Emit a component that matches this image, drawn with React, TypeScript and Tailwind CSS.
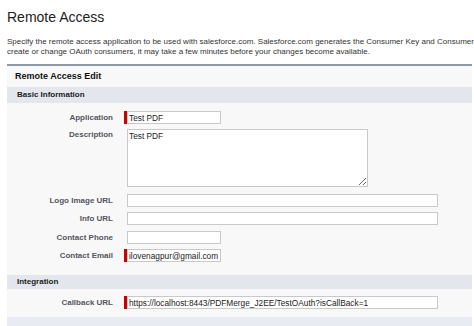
import React from "react";

interface FieldRowProps {
  label: string;
  value?: string;
  width: string;
  required?: boolean;
  className?: string;
}

const FieldRow: React.FC<FieldRowProps> = ({ label, value, width, required, className }) => {
  return (
    <div className={`flex items-start ${className ?? ""}`}>
      <div className="w-[106px] shrink-0 pt-[1px] text-right text-[8px] font-bold leading-[11px] text-[#55555f]">
        {label}
      </div>
      <div className="w-[11px] shrink-0" />
      <div className={`h-[13px] w-[3px] shrink-0 ${required ? "bg-[#c00]" : ""}`} />
      <input
        type="text"
        defaultValue={value}
        className={`h-[13px] ${width} border border-[#c9c9c9] bg-white px-[1px] text-[8.3px] leading-[11px] text-[#222] outline-none`}
      />
    </div>
  );
};

const App: React.FC = () => {
  return (
    <div
      className="h-[326px] w-[474px] overflow-hidden bg-white"
      style={{ fontFamily: '"Liberation Sans", Arial, sans-serif' }}
    >
      {/* Titre */}
      <div className="px-[7px] pt-[9px]">
        <h1 className="text-[14px] leading-[16px] text-[#222]">Remote Access</h1>
        <div className="mt-[12px] whitespace-nowrap text-[8px] leading-[10px] text-[#333]">
          Specify the remote access application to be used with salesforce.com. Salesforce.com generates the Consumer Key and Consumer Secret for your application.
          <br />
          create or change OAuth consumers, it may take a few minutes before your changes become available.
        </div>
      </div>

      {/* Panel */}
      <div className="ml-[7px] mt-[7px] w-[465px] border-t-2 border-[#8f9aa4] bg-[#f8f8f8]">
        <div className="flex h-[21px] items-center pl-[8px] text-[9px] font-bold text-[#111]">
          Remote Access Edit
        </div>

        <div className="flex h-[16px] items-center bg-[#e3e6ed] pl-[10px] text-[8px] font-bold text-[#222]">
          Basic Information
        </div>

        <div className="pb-[13px] pt-[8px]">
          <FieldRow label="Application" value="Test PDF" width="w-[94px]" required />

          <div className="mt-[5px] flex items-start">
            <div className="w-[106px] shrink-0 text-right text-[8px] font-bold leading-[11px] text-[#55555f]">
              Description
            </div>
            <div className="w-[14px] shrink-0" />
            <textarea
              defaultValue="Test PDF"
              className="h-[58px] w-[241px] border border-[#c9c9c9] bg-white px-[1px] py-[1px] text-[8.3px] leading-[11px] text-[#222] outline-none"
            />
          </div>

          <FieldRow label="Logo Image URL" width="w-[311px]" className="mt-[7px]" />
          <FieldRow label="Info URL" width="w-[311px]" className="mt-[5px]" />
          <FieldRow label="Contact Phone" width="w-[94px]" className="mt-[6px]" />
          <FieldRow label="Contact Email" value="ilovenagpur@gmail.com" width="w-[94px]" required className="mt-[5px]" />
        </div>

        <div className="flex h-[14px] items-center bg-[#e3e6ed] pl-[10px] text-[8px] font-bold text-[#222]">
          Integration
        </div>

        <div className="pb-[8px] pt-[7px]">
          <FieldRow
            label="Callback URL"
            value="https://localhost:8443/PDFMerge_J2EE/TestOAuth?isCallBack=1"
            width="w-[311px]"
            required
          />
        </div>

        <div className="h-[10px] bg-[#e8ebf1]" />
      </div>
    </div>
  );
};

export default App;
